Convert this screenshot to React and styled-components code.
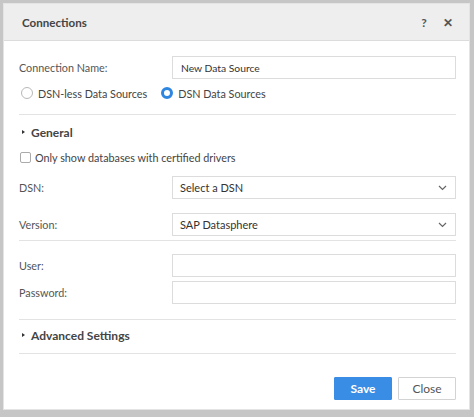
import React from "react";
import styled, { createGlobalStyle } from "styled-components";

const GlobalStyle = createGlobalStyle`
  html, body {
    margin: 0;
    padding: 0;
    background: #c6c6c6;
  }
  body {
    font-family: Lato, "Open Sans", Arial, sans-serif;
    width: 474px;
    height: 417px;
    overflow: hidden;
  }
`;

const Frame = styled.div`
  box-sizing: border-box;
  width: 474px;
  height: 417px;
  padding: 3px 4px 7px 3px;
`;

const Dialog = styled.div`
  box-sizing: border-box;
  height: 100%;
  background: #fff;
  display: flex;
  flex-direction: column;
  border: 1px solid #e4e4e4;
`;

const Header = styled.div`
  height: 36px;
  background: #eeeeee;
  border-bottom: 1px solid #dcdcdc;
  display: flex;
  align-items: center;
  padding: 0 16px 0 18px;
`;

const Title = styled.div`
  flex: 1;
  font-size: 11.6px;
  font-weight: 700;
  color: #444;
`;

const HeaderIcon = styled.span`
  font-size: 12px;
  font-weight: 700;
  color: #555;
  margin-left: 14px;
  width: 10px;
  text-align: center;
`;

const Body = styled.div`
  flex: 1;
  padding: 15px 13px 0 15px;
  display: flex;
  flex-direction: column;
`;

const FieldRow = styled.div`
  display: flex;
  align-items: center;
  margin-top: ${(p) => p.$mt || 0}px;
`;

const Label = styled.div`
  width: 153px;
  font-size: 10.8px;
  color: #555;
`;

const Input = styled.div`
  flex: 1;
  box-sizing: border-box;
  height: 23px;
  border: 1px solid #dcdcdc;
  display: flex;
  align-items: center;
  padding: 0 8px;
  font-size: 10.3px;
  color: #333;
`;

const Select = styled(Input)`
  font-size: 11px;
  justify-content: space-between;
  padding: 0 8px 0 7px;
`;

const Chevron = () => (
  <svg width="9" height="6" viewBox="0 0 9 6">
    <path d="M1 1 L4.5 4.5 L8 1" fill="none" stroke="#666" strokeWidth="1.2" />
  </svg>
);

const RadioRow = styled.div`
  display: flex;
  align-items: center;
  height: 16px;
  margin-top: 6px;
`;

const RadioOption = styled.label`
  display: flex;
  align-items: center;
  font-size: 10.8px;
  color: #444;
  margin-right: 12px;
`;

const RadioDot = styled.span`
  box-sizing: border-box;
  width: 12px;
  height: 12px;
  border-radius: 50%;
  margin: 0 5px 0 2px;
  border: ${(p) => (p.$on ? "3px solid #2f86e0" : "1px solid #b8b8b8")};
  background: #fff;
`;

const Divider = styled.div`
  height: 1px;
  background: #e3e3e3;
  margin-top: ${(p) => p.$mt || 0}px;
`;

const Section = styled.div`
  display: flex;
  align-items: center;
  height: 16px;
  margin-top: ${(p) => p.$mt || 0}px;
  font-size: 12px;
  font-weight: 700;
  color: #444;
`;

const Caret = styled.span`
  width: 0;
  height: 0;
  border-top: 2.5px solid transparent;
  border-bottom: 2.5px solid transparent;
  border-left: 3px solid #333;
  margin: 0 6px 0 3px;
`;

const CheckRow = styled.label`
  display: flex;
  align-items: center;
  height: 16px;
  margin-top: 9px;
  font-size: 10.8px;
  color: #444;
`;

const Box = styled.span`
  box-sizing: border-box;
  width: 11px;
  height: 11px;
  border: 1px solid #aaa;
  border-radius: 2px;
  margin: 0 4px 0 1px;
`;

const Footer = styled.div`
  display: flex;
  justify-content: flex-end;
  gap: 6px;
  margin-top: 23px;
`;

const Button = styled.button`
  box-sizing: border-box;
  width: 58px;
  height: 23px;
  font-family: inherit;
  font-size: 12px;
  border-radius: 1px;
  cursor: pointer;
  background: ${(p) => (p.$primary ? "#3a8de4" : "#fff")};
  color: ${(p) => (p.$primary ? "#fff" : "#555")};
  font-weight: ${(p) => (p.$primary ? 700 : 400)};
  border: 1px solid ${(p) => (p.$primary ? "#3a8de4" : "#d3d3d3")};
`;

export default function App() {
  return (
    <>
      <GlobalStyle />
      <Frame>
        <Dialog>
          <Header>
            <Title>Connections</Title>
            <HeaderIcon>?</HeaderIcon>
            <HeaderIcon>✕</HeaderIcon>
          </Header>
          <Body>
            <FieldRow>
              <Label>Connection Name:</Label>
              <Input>New Data Source</Input>
            </FieldRow>
            <RadioRow>
              <RadioOption>
                <RadioDot />
                DSN-less Data Sources
              </RadioOption>
              <RadioOption>
                <RadioDot $on />
                DSN Data Sources
              </RadioOption>
            </RadioRow>
            <Divider $mt={13} />
            <Section $mt={9}>
              <Caret />
              General
            </Section>
            <CheckRow>
              <Box />
              Only show databases with certified drivers
            </CheckRow>
            <FieldRow $mt={11}>
              <Label>DSN:</Label>
              <Select>
                Select a DSN
                <Chevron />
              </Select>
            </FieldRow>
            <FieldRow $mt={14}>
              <Label>Version:</Label>
              <Select>
                SAP Datasphere
                <Chevron />
              </Select>
            </FieldRow>
            <Divider $mt={4} />
            <FieldRow $mt={13}>
              <Label>User:</Label>
              <Input />
            </FieldRow>
            <FieldRow $mt={4}>
              <Label>Password:</Label>
              <Input />
            </FieldRow>
            <Divider $mt={15} />
            <Section $mt={7}>
              <Caret />
              Advanced Settings
            </Section>
            <Divider $mt={10} />
            <Footer>
              <Button $primary>Save</Button>
              <Button>Close</Button>
            </Footer>
          </Body>
        </Dialog>
      </Frame>
    </>
  );
}
